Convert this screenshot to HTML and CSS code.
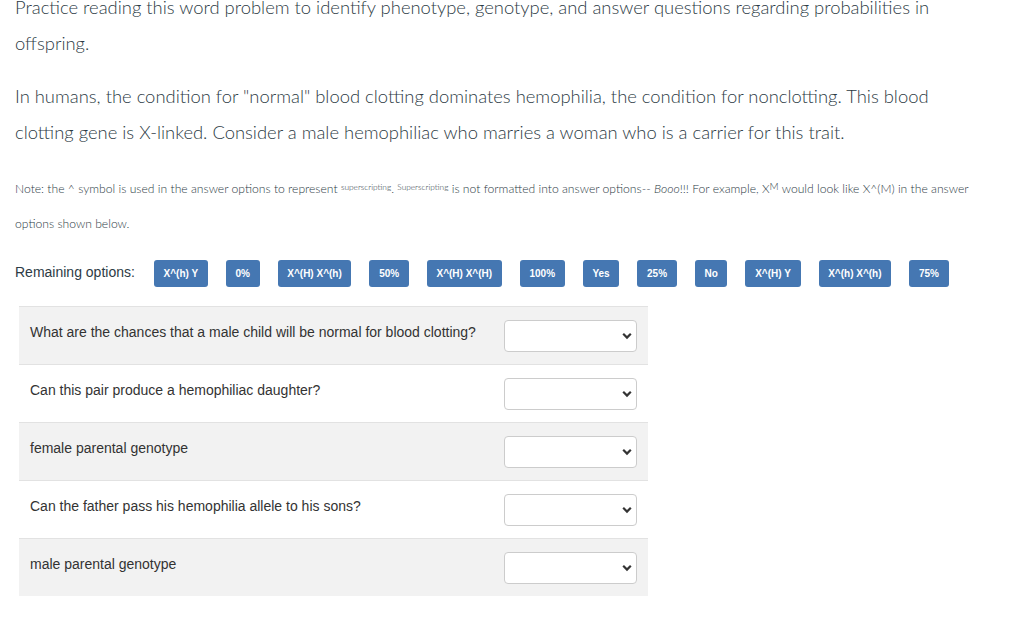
FILE: index.html
```html
<!DOCTYPE html>
<html>
<head>
<meta charset="utf-8">
<link rel="stylesheet" href="styles.css">
</head>
<body>
<div class="page">
  <p class="lead">Practice reading this word problem to identify phenotype, genotype, and answer questions regarding probabilities in offspring.</p>
  <p class="lead">In humans, the condition for "normal" blood clotting dominates hemophilia, the condition for nonclotting. This blood clotting gene is X-linked. Consider a male hemophiliac who marries a woman who is a carrier for this trait.</p>
  <p class="note">Note: the ^ symbol is used in the answer options to represent <sup>superscripting</sup>. <sup>Superscripting</sup> is not formatted into answer options-- <em>Booo</em>!!! For example, X<sup class="m">M</sup> would look like X^(M) in the answer options shown below.</p>

  <div class="options">
    <span class="opt-label">Remaining options:</span>
    <span class="chip">X^(h) Y</span>
    <span class="chip">0%</span>
    <span class="chip">X^(H) X^(h)</span>
    <span class="chip">50%</span>
    <span class="chip">X^(H) X^(H)</span>
    <span class="chip">100%</span>
    <span class="chip">Yes</span>
    <span class="chip">25%</span>
    <span class="chip">No</span>
    <span class="chip">X^(H) Y</span>
    <span class="chip">X^(h) X^(h)</span>
    <span class="chip">75%</span>
  </div>

  <div class="qtable">
    <div class="row alt">
      <div class="q">What are the chances that a male child will be normal for blood clotting?</div>
      <div class="sel"><svg class="chev" viewBox="0 0 10 8" width="10" height="8"><path d="M1.2 1.8 L5 5.6 L8.8 1.8" fill="none" stroke="#333" stroke-width="2.2"/></svg></div>
    </div>
    <div class="row">
      <div class="q">Can this pair produce a hemophiliac daughter?</div>
      <div class="sel"><svg class="chev" viewBox="0 0 10 8" width="10" height="8"><path d="M1.2 1.8 L5 5.6 L8.8 1.8" fill="none" stroke="#333" stroke-width="2.2"/></svg></div>
    </div>
    <div class="row alt">
      <div class="q">female parental genotype</div>
      <div class="sel"><svg class="chev" viewBox="0 0 10 8" width="10" height="8"><path d="M1.2 1.8 L5 5.6 L8.8 1.8" fill="none" stroke="#333" stroke-width="2.2"/></svg></div>
    </div>
    <div class="row">
      <div class="q">Can the father pass his hemophilia allele to his sons?</div>
      <div class="sel"><svg class="chev" viewBox="0 0 10 8" width="10" height="8"><path d="M1.2 1.8 L5 5.6 L8.8 1.8" fill="none" stroke="#333" stroke-width="2.2"/></svg></div>
    </div>
    <div class="row alt">
      <div class="q">male parental genotype</div>
      <div class="sel"><svg class="chev" viewBox="0 0 10 8" width="10" height="8"><path d="M1.2 1.8 L5 5.6 L8.8 1.8" fill="none" stroke="#333" stroke-width="2.2"/></svg></div>
    </div>
  </div>
</div>
</body>
</html>
```

FILE: styles.css
```css
html, body {
  margin: 0;
  padding: 0;
  background: #fff;
}
.page {
  margin-top: -10px;
  padding: 0 15px;
  color: #2d3b45;
  font-family: Lato, "Liberation Sans", sans-serif;
  font-weight: 300;
}
.lead {
  margin: 0 0 18px 0;
  font-size: 18.4px;
  line-height: 35.5px;
  width: 950px;
}
.note {
  margin: 21px 0 0 0;
  font-size: 12.15px;
  line-height: 35px;
  width: 972px;
  color: #2d3b45;
}
.note sup {
  font-size: 8.3px;
  vertical-align: 3px;
  line-height: 1;
}
.note sup.m {
  font-size: 10px;
}
.options {
  display: flex;
  align-items: center;
  gap: 18px;
  margin-top: 19px;
  font-family: "Liberation Sans", Arial, sans-serif;
  font-weight: normal;
}
.opt-label {
  font-size: 14px;
  color: #2d3b45;
  margin-right: 1px;
  position: relative;
  top: -2px;
}
.chip {
  display: inline-block;
  background: #4577b2;
  color: #fff;
  font-size: 10px;
  font-weight: bold;
  padding: 0 9.7px;
  height: 27px;
  line-height: 27px;
  border-radius: 3px;
}
.qtable {
  margin: 19px 0 0 4px;
  width: 629px;
  font-family: "Liberation Sans", Arial, sans-serif;
  font-weight: normal;
}
.row {
  display: flex;
  align-items: center;
  justify-content: space-between;
  height: 57px;
  border-top: 1px solid #e2e2e2;
  padding: 0 11px;
  background: #fff;
}
.row.alt {
  background: #f2f2f2;
}
.q {
  font-size: 14px;
  color: #333;
  position: relative;
  top: -4px;
}
.sel {
  box-sizing: border-box;
  width: 133px;
  height: 32px;
  background: #fff;
  border: 1px solid #ccc;
  border-radius: 4px;
  display: flex;
  align-items: center;
  justify-content: flex-end;
  padding-right: 4px;
}
.chev {
  display: block;
}
```
